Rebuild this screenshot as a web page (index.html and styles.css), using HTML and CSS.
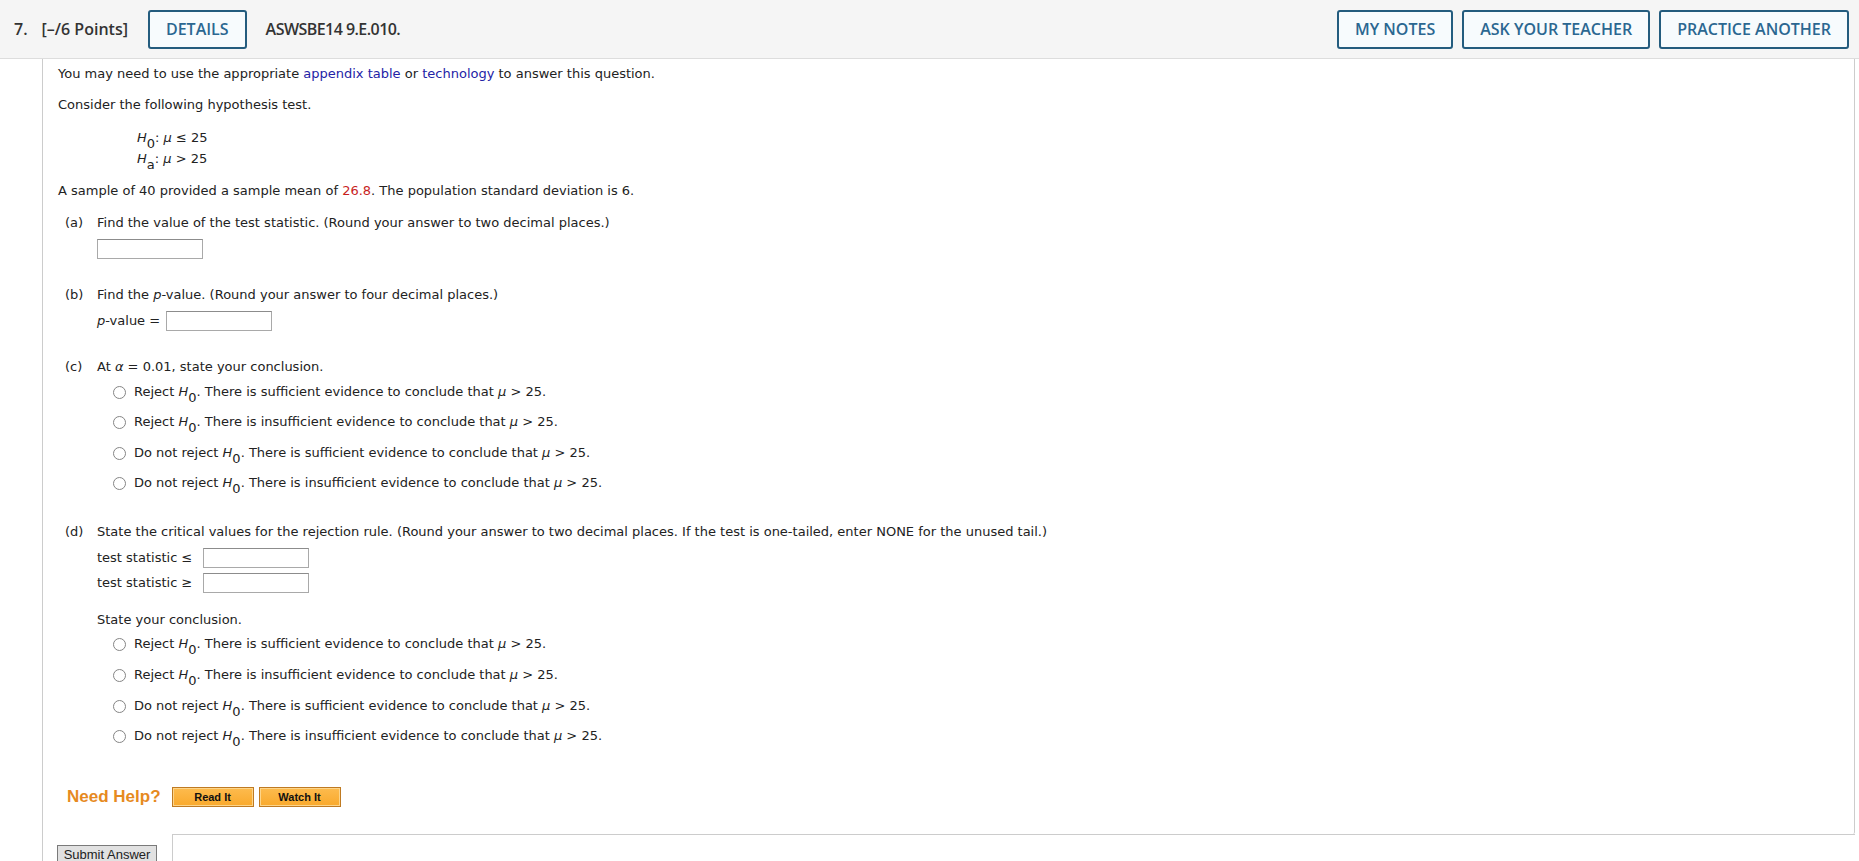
FILE: index.html
```html
<!DOCTYPE html>
<html lang="en">
<head>
<meta charset="utf-8">
<title>ASWSBE14 9.E.010.</title>
<link rel="stylesheet" href="styles.css">
</head>
<body>
<div class="header">
  <div class="hleft">
    <span class="qtitle"><span class="qnum">7.</span>[–/6 Points]</span>
    <button class="hbtn details">DETAILS</button>
    <span class="qcode">ASWSBE14 9.E.010.</span>
  </div>
  <div class="hright">
    <button class="hbtn">MY NOTES</button>
    <button class="hbtn">ASK YOUR TEACHER</button>
    <button class="hbtn">PRACTICE ANOTHER</button>
  </div>
</div>

<div class="main">
  <div class="qbody">
    <p class="line intro">You may need to use the appropriate <a class="lnk">appendix table</a> or <a class="lnk">technology</a> to answer this question.</p>
    <p class="line consider">Consider the following hypothesis test.</p>
    <div class="hyp">
      <div class="hrow"><i>H</i><span class="sub">0</span>: <i>μ</i> ≤ 25</div>
      <div class="hrow"><i>H</i><span class="sub">a</span>: <i>μ</i> &gt; 25</div>
    </div>
    <p class="line sample">A sample of 40 provided a sample mean of <span class="red">26.8</span>. The population standard deviation is 6.</p>

    <div class="part part-a">
      <div class="line"><span class="plabel">(a)</span>Find the value of the test statistic. (Round your answer to two decimal places.)</div>
      <div class="pbody"><div class="inrow first"><span class="field"></span></div></div>
    </div>

    <div class="part part-b">
      <div class="line"><span class="plabel">(b)</span>Find the <i>p</i>-value. (Round your answer to four decimal places.)</div>
      <div class="pbody"><div class="inrow first"><span class="flabel pv"><i>p</i>-value =</span><span class="field"></span></div></div>
    </div>

    <div class="part part-c">
      <div class="line"><span class="plabel">(c)</span>At <i>α</i> = 0.01, state your conclusion.</div>
      <div class="pbody">
        <div class="opts">
          <div class="opt"><span class="radio"></span><span class="otext">Reject <i>H</i><span class="sub">0</span>. There is sufficient evidence to conclude that <i>μ</i> &gt; 25.</span></div>
          <div class="opt"><span class="radio"></span><span class="otext">Reject <i>H</i><span class="sub">0</span>. There is insufficient evidence to conclude that <i>μ</i> &gt; 25.</span></div>
          <div class="opt"><span class="radio"></span><span class="otext">Do not reject <i>H</i><span class="sub">0</span>. There is sufficient evidence to conclude that <i>μ</i> &gt; 25.</span></div>
          <div class="opt"><span class="radio"></span><span class="otext">Do not reject <i>H</i><span class="sub">0</span>. There is insufficient evidence to conclude that <i>μ</i> &gt; 25.</span></div>
        </div>
      </div>
    </div>

    <div class="part part-d">
      <div class="line"><span class="plabel">(d)</span>State the critical values for the rejection rule. (Round your answer to two decimal places. If the test is one-tailed, enter NONE for the unused tail.)</div>
      <div class="pbody">
        <div class="inrow first"><span class="flabel ts">test statistic ≤</span><span class="field"></span></div>
        <div class="inrow second"><span class="flabel ts">test statistic ≥</span><span class="field"></span></div>
        <div class="line stateconc">State your conclusion.</div>
        <div class="opts opts2">
          <div class="opt"><span class="radio"></span><span class="otext">Reject <i>H</i><span class="sub">0</span>. There is sufficient evidence to conclude that <i>μ</i> &gt; 25.</span></div>
          <div class="opt"><span class="radio"></span><span class="otext">Reject <i>H</i><span class="sub">0</span>. There is insufficient evidence to conclude that <i>μ</i> &gt; 25.</span></div>
          <div class="opt"><span class="radio"></span><span class="otext">Do not reject <i>H</i><span class="sub">0</span>. There is sufficient evidence to conclude that <i>μ</i> &gt; 25.</span></div>
          <div class="opt"><span class="radio"></span><span class="otext">Do not reject <i>H</i><span class="sub">0</span>. There is insufficient evidence to conclude that <i>μ</i> &gt; 25.</span></div>
        </div>
      </div>
    </div>

    <div class="help">
      <span class="needhelp">Need Help?</span>
      <button class="hlpbtn">Read It</button>
      <button class="hlpbtn">Watch It</button>
    </div>
  </div>
  <div class="footer">
    <button class="submit">Submit Answer</button>
    <div class="fbox"></div>
  </div>
</div>
</body>
</html>
```

FILE: styles.css
```css
html, body {
  margin: 0;
  padding: 0;
  background: #ffffff;
}

body {
  width: 1859px;
  height: 861px;
  overflow: hidden;
  font-family: "DejaVu Sans", Verdana, sans-serif;
  font-size: 13px;
  color: #222222;
}

/* ---------- header ---------- */
.header {
  display: flex;
  justify-content: space-between;
  align-items: center;
  height: 58px;
  padding: 0 10px 0 14px;
  background: #f5f5f5;
  border-bottom: 1px solid #dddddd;
  font-family: "Open Sans", "Liberation Sans", sans-serif;
}

.hleft, .hright {
  display: flex;
  align-items: center;
}

.hright {
  gap: 9px;
}

.qtitle {
  font-size: 16px;
  font-weight: 600;
  color: #333333;
  margin-right: 20px;
  white-space: nowrap;
}

.qnum {
  margin-right: 14px;
}

.qcode {
  font-size: 16px;
  font-weight: 600;
  color: #333333;
  margin-left: 19px;
  letter-spacing: -0.55px;
  white-space: nowrap;
}

.hbtn {
  height: 39px;
  padding: 0 16px;
  border: 2px solid #245c7e;
  border-radius: 3px;
  background: #f7fbfd;
  color: #2b6791;
  font-family: "Open Sans", "Liberation Sans", sans-serif;
  font-size: 16px;
  font-weight: 600;
  line-height: 35px;
  cursor: pointer;
}

/* ---------- question body ---------- */
.main {
  margin: 0 4px 0 42px;
  border-left: 1px solid #cccccc;
}

.qbody {
  border-right: 1px solid #cccccc;
  border-bottom-right-radius: 2px;
  padding: 5px 0 27px 15px;
}

.line {
  margin: 0;
  height: 20px;
  line-height: 20px;
  white-space: nowrap;
}

.lnk {
  color: #2323a6;
  text-decoration: none;
}

.red {
  color: #c81e1e;
}

i {
  font-style: italic;
}

.sub {
  vertical-align: -6px;
  line-height: 10px;
  font-size: 13px;
}

.consider { margin-top: 10.5px; }

.hyp {
  margin-top: 12px;
  padding-left: 79px;
}

.hrow {
  height: 21px;
  line-height: 21px;
  white-space: nowrap;
}

.sample { margin-top: 12.5px; }

.part {
  padding-left: 7px;
}

.plabel {
  display: inline-block;
  width: 32px;
}

.pbody {
  padding-left: 32px;
}

.part-a { margin-top: 12px; }
.part-b { margin-top: 25.6px; }
.part-c { margin-top: 26px; }
.part-d { margin-top: 28.5px; }

.inrow {
  display: flex;
  align-items: center;
  height: 20px;
  line-height: 20px;
  white-space: nowrap;
}

.inrow.first { margin-top: 6px; }
.part-b .inrow.first { margin-top: 6.4px; }
.inrow.second { margin-top: 5px; }

.flabel {
  display: inline-block;
}

.flabel.pv { width: 69px; }
.flabel.ts { width: 106px; }

.field {
  display: inline-block;
  box-sizing: border-box;
  width: 106px;
  height: 20px;
  border: 1px solid #a9a9a9;
  border-top-color: #8c8c8c;
  background: #ffffff;
}

.opts {
  margin-top: 5px;
}

.opts2 {
  margin-top: 4px;
}

.opt {
  display: flex;
  align-items: center;
  height: 20px;
  padding-left: 16px;
  white-space: nowrap;
}

.otext {
  height: 20px;
  line-height: 20px;
}

.opt + .opt { margin-top: 10.5px; }
.opts2 .opt + .opt { margin-top: 10.8px; }

.radio {
  display: inline-block;
  box-sizing: border-box;
  width: 13px;
  height: 13px;
  margin: 1px 8px 0 0;
  border: 1px solid #858585;
  border-radius: 50%;
  background: #ffffff;
  flex: none;
}

.stateconc { margin-top: 17px; }

/* ---------- help ---------- */
.help {
  display: flex;
  align-items: center;
  margin-top: 40.6px;
  height: 20px;
  padding-left: 9px;
}

.needhelp {
  font-family: "Liberation Sans", Arial, sans-serif;
  font-size: 17px;
  font-weight: 700;
  color: #e68a1f;
  margin-right: 11px;
}

.hlpbtn {
  box-sizing: border-box;
  width: 82px;
  height: 20px;
  margin-right: 5px;
  padding: 0;
  border: 1px solid #bf7a22;
  box-shadow: inset 0 0 0 1px #fdd58a;
  background: linear-gradient(#fdbb4e, #f9a92c);
  color: #111111;
  font-family: "Liberation Sans", Arial, sans-serif;
  font-size: 11px;
  font-weight: 700;
  cursor: pointer;
}

/* ---------- footer ---------- */
.footer {
  display: flex;
  align-items: flex-start;
  height: 60px;
}

.submit {
  margin: 11px 0 0 14px;
  box-sizing: border-box;
  width: 100px;
  padding: 1px 0 3px;
  border: 1px solid #7a7a7a;
  background: #e1e1e1;
  color: #222222;
  font-family: "Liberation Sans", Arial, sans-serif;
  font-size: 13px;
  line-height: 16px;
  cursor: pointer;
}

.fbox {
  flex: 1;
  margin-left: 15px;
  height: 60px;
  border-top: 1px solid #cccccc;
  border-left: 1px solid #cccccc;
}
```
